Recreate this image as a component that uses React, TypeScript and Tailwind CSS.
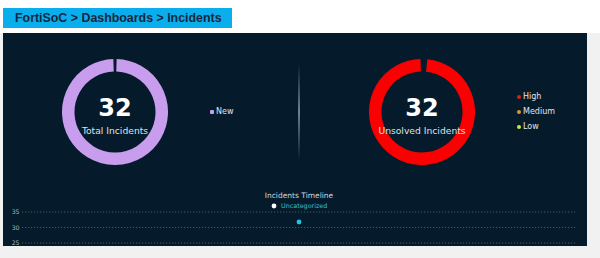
import React from "react";

const chartFont = { fontFamily: '"DejaVu Sans", Verdana, sans-serif' };

// arc path on a 106x106 box, angles clockwise from 12 o'clock
function arc(r: number, a0: number, a1: number) {
  const rad = (d: number) => (d * Math.PI) / 180;
  const x0 = 53 + r * Math.sin(rad(a0));
  const y0 = 53 - r * Math.cos(rad(a0));
  const x1 = 53 + r * Math.sin(rad(a1));
  const y1 = 53 - r * Math.cos(rad(a1));
  const large = a1 - a0 > 180 ? 1 : 0;
  return `M ${x0} ${y0} A ${r} ${r} 0 ${large} 1 ${x1} ${y1}`;
}

function Donut({ color, from, to, label }: { color: string; from: number; to: number; label: string }) {
  return (
    <div className="relative w-[106px] h-[106px] shrink-0">
      <svg width="106" height="106" viewBox="0 0 106 106" className="absolute inset-0">
        <path d={arc(46.75, from, to)} fill="none" stroke={color} strokeWidth="12.5" />
      </svg>
      <div className="relative flex flex-col items-center pt-[37px]" style={chartFont}>
        <span className="text-[24px] leading-[24px] font-bold text-white">32</span>
        <span className="mt-[6px] text-[9.2px] leading-[10px] text-[#dde2e7] whitespace-nowrap">{label}</span>
      </div>
    </div>
  );
}

const severities = [
  { name: "High", color: "#d3221c" },
  { name: "Medium", color: "#e0952c" },
  { name: "Low", color: "#c6ea3a" },
];

export default function App() {
  return (
    <div className="w-[600px] h-[258px] overflow-hidden bg-[#f1f1f1]">
      {/* Breadcrumb */}
      <div className="h-[33px] bg-white pt-[8px] pl-[3px]">
        <div
          className="w-[229px] h-[20px] bg-[#0aaeec] pl-[12px] flex items-center text-[12.4px] font-bold text-[#14273d]"
          style={{ fontFamily: '"Liberation Sans", Arial, sans-serif' }}
        >
          FortiSoC &gt; Dashboards &gt; Incidents
        </div>
      </div>

      {/* Dashboard panel */}
      <div className="ml-[3px] w-[584px] h-[213px] bg-[#051b2b] overflow-hidden">
        <div className="flex h-[150px]">
          <div className="w-[295px] pl-[59px] pt-[26px]">
            <div className="flex items-center">
              <Donut color="#c99ded" from={1.8} to={358.2} label="Total Incidents" />
              <div className="ml-[42px] flex items-center gap-[2px] text-[8px] text-[#e1e5ea]" style={chartFont}>
                <span className="w-[4px] h-[4px] rounded-[1px] bg-[#c99ded]" />
                New
              </div>
            </div>
          </div>

          <div className="w-[2px] mt-[31px] h-[96px] bg-gradient-to-b from-transparent via-[#6f8294] to-transparent" />

          <div className="flex-1 pl-[69px] pt-[26px]">
            <div className="flex items-center">
              <Donut color="#fb0000" from={5.8} to={358.4} label="Unsolved Incidents" />
              <div className="ml-[42px] flex flex-col gap-[5px]" style={chartFont}>
                {severities.map((s) => (
                  <div key={s.name} className="flex items-center gap-[2px] h-[10px] text-[8px] text-[#e1e5ea]">
                    <span className="w-[4px] h-[4px] rounded-full" style={{ background: s.color }} />
                    {s.name}
                  </div>
                ))}
              </div>
            </div>
          </div>
        </div>

        {/* Incidents timeline */}
        <svg width="584" height="63" viewBox="0 0 584 63" style={chartFont} className="block">
          <text x="296" y="14.5" textAnchor="middle" fontSize="7.5" fill="#d3d8dd">
            Incidents Timeline
          </text>
          <circle cx="271" cy="23" r="2.4" fill="#ffffff" />
          <text x="278" y="25.3" fontSize="6.4" fill="#2fc3d6">
            Uncategorized
          </text>
          {[
            { y: 29, v: "35" },
            { y: 44.5, v: "30" },
            { y: 60, v: "25" },
          ].map((g) => (
            <g key={g.v}>
              <text x="16.5" y={g.y + 2.2} textAnchor="end" fontSize="6.2" fill="#aab4bd">
                {g.v}
              </text>
              <line x1="19" x2="573" y1={g.y} y2={g.y} stroke="#56677a" strokeWidth="0.8" strokeDasharray="1.2 1.8" />
            </g>
          ))}
          <circle cx="296" cy="39" r="2.4" fill="#1fc6e2" />
        </svg>
      </div>
    </div>
  );
}
